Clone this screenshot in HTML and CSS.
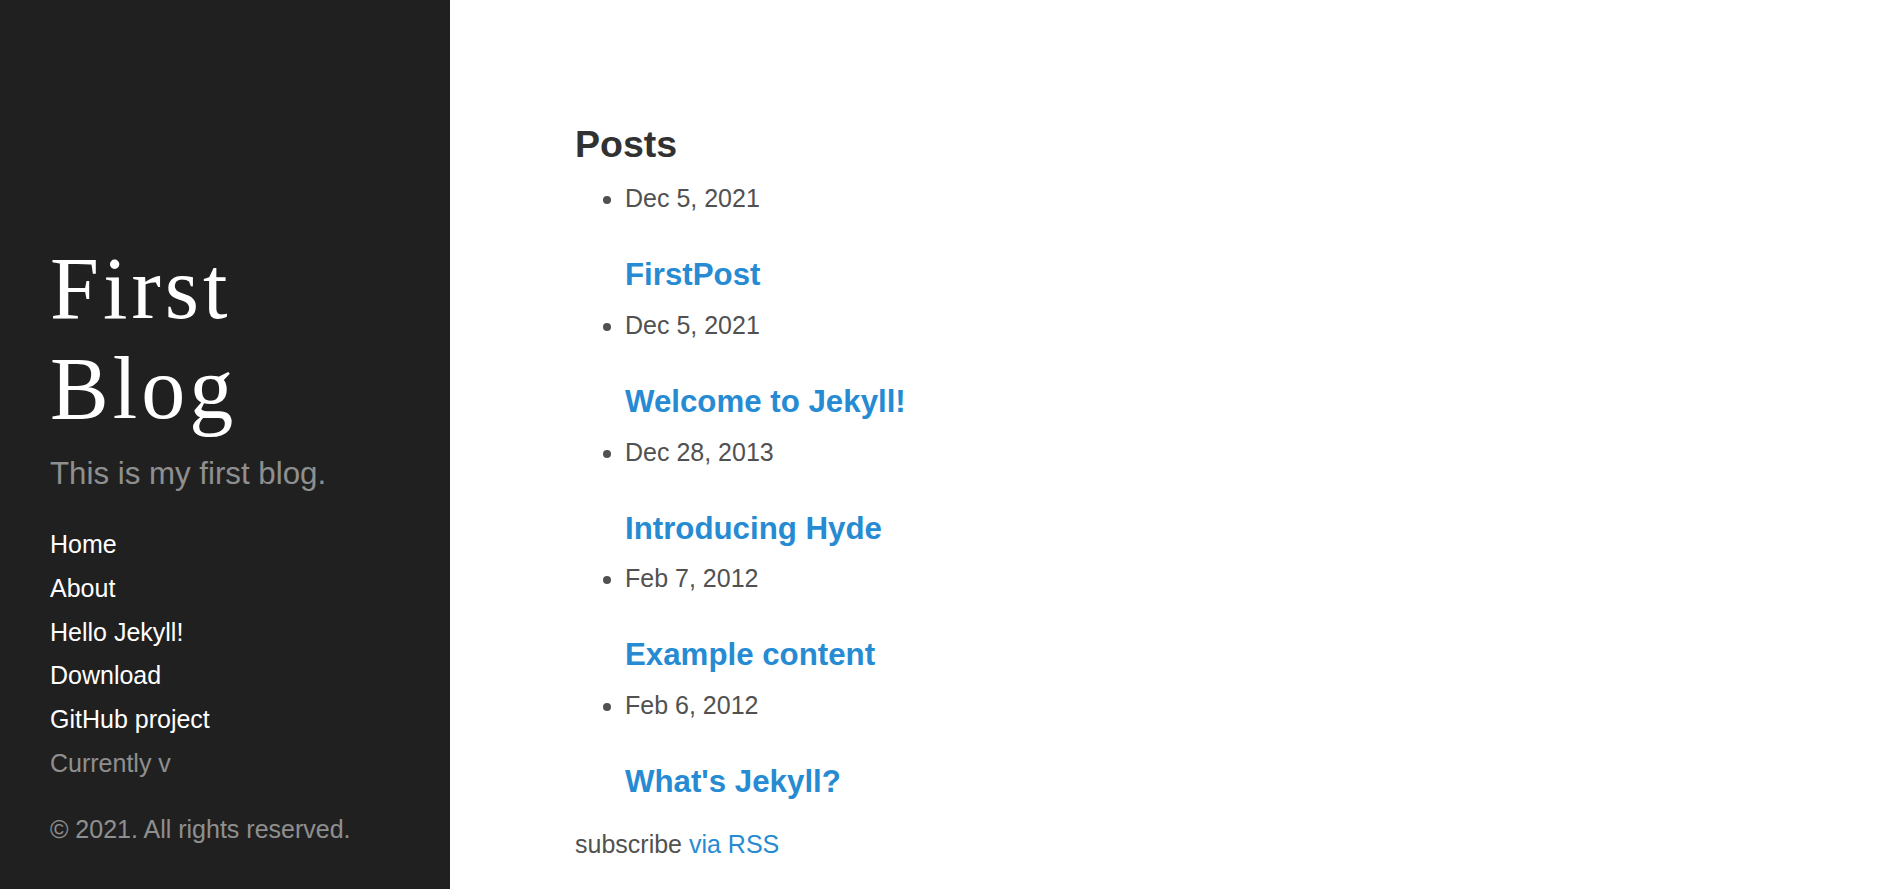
FILE: index.html
```html
<!DOCTYPE html>
<html lang="en">
<head>
<meta charset="utf-8">
<title>First Blog</title>
<link rel="stylesheet" href="styles.css">
</head>
<body>
<div class="page">
  <aside class="sidebar">
    <div class="sidebar-about">
      <h1 class="site-title"><a href="#">First Blog</a></h1>
      <p class="lead">This is my first blog.</p>
    </div>
    <nav class="sidebar-nav">
      <a class="sidebar-nav-item" href="#">Home</a>
      <a class="sidebar-nav-item" href="#">About</a>
      <a class="sidebar-nav-item" href="#">Hello Jekyll!</a>
      <a class="sidebar-nav-item" href="#">Download</a>
      <a class="sidebar-nav-item" href="#">GitHub project</a>
      <span class="sidebar-nav-item muted">Currently v</span>
    </nav>
    <p class="copyright">&copy; 2021. All rights reserved.</p>
  </aside>
  <main class="content">
    <h2 class="post-list-heading">Posts</h2>
    <ul class="post-list">
      <li>
        <span class="post-meta">Dec 5, 2021</span>
        <h3 class="post-title"><a class="post-link" href="#">FirstPost</a></h3>
      </li>
      <li>
        <span class="post-meta">Dec 5, 2021</span>
        <h3 class="post-title"><a class="post-link" href="#">Welcome to Jekyll!</a></h3>
      </li>
      <li>
        <span class="post-meta">Dec 28, 2013</span>
        <h3 class="post-title"><a class="post-link" href="#">Introducing Hyde</a></h3>
      </li>
      <li>
        <span class="post-meta">Feb 7, 2012</span>
        <h3 class="post-title"><a class="post-link" href="#">Example content</a></h3>
      </li>
      <li>
        <span class="post-meta">Feb 6, 2012</span>
        <h3 class="post-title"><a class="post-link" href="#">What's Jekyll?</a></h3>
      </li>
    </ul>
    <p class="rss-subscribe">subscribe <a href="#">via RSS</a></p>
  </main>
</div>
</body>
</html>
```

FILE: styles.css
```css
html, body {
  margin: 0;
  padding: 0;
}

body {
  font-family: "Liberation Sans", Arial, Helvetica, sans-serif;
  font-size: 25px;
  line-height: 1.5;
  color: #515151;
  background: #fff;
}

a {
  color: #268bd2;
  text-decoration: none;
}

.page {
  display: flex;
  align-items: flex-start;
  height: 889px;
  overflow: hidden;
}

/* Sidebar */
.sidebar {
  flex: 0 0 450px;
  width: 450px;
  height: 889px;
  box-sizing: border-box;
  padding: 50px 50px 16px;
  background: #202020;
  color: rgba(255, 255, 255, 0.5);
  display: flex;
  flex-direction: column;
  justify-content: flex-end;
}

.sidebar a {
  color: #fff;
}

.site-title {
  margin: 0 0 12.5px;
  font-family: "Liberation Serif", "Times New Roman", serif;
  font-weight: normal;
  font-size: 88px;
  line-height: 100px;
  letter-spacing: 4px;
  width: min-content;
  color: #fff;
}

.lead {
  margin: 0 0 25px;
  font-size: 31.25px;
  font-weight: 300;
  line-height: 1.5;
}

.sidebar-nav {
  margin-bottom: 25px;
}

.sidebar-nav-item {
  display: block;
  line-height: 1.75;
}

.sidebar-nav-item.muted {
  color: rgba(255, 255, 255, 0.5);
}

.copyright {
  margin: 0 0 25px;
}

/* Content */
.content {
  flex: 0 1 950px;
  margin-left: 125px;
  padding-top: 121px;
}

.post-list-heading {
  margin: 0 0 12.5px;
  font-size: 37.5px;
  line-height: 1.25;
  font-weight: bold;
  color: #313131;
}

.post-list {
  margin: 0 0 25px;
  padding-left: 50px;
}

.post-meta {
  display: block;
}

.post-title {
  margin: 37.5px 0 12.5px;
  font-size: 31.25px;
  line-height: 1.25;
  font-weight: bold;
}

.rss-subscribe {
  margin: 0 0 25px;
}
```
